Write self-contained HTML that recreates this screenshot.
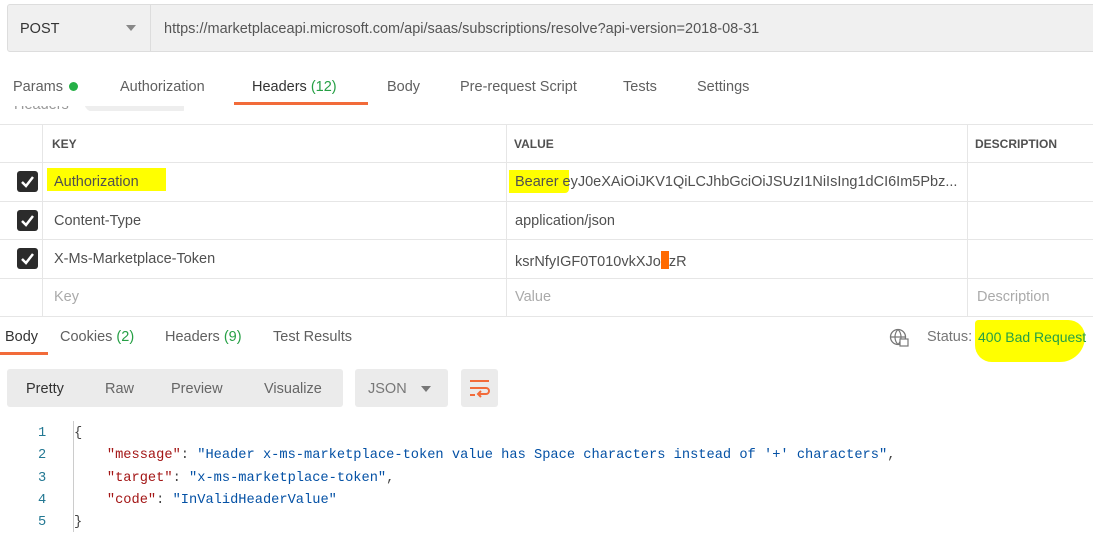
<!DOCTYPE html>
<html><head><style>
*{margin:0;padding:0;box-sizing:border-box}
body{width:1093px;height:543px;overflow:hidden;background:#fff;font-family:"Liberation Sans",sans-serif;color:#505050;position:relative;font-size:14.5px}
.a{position:absolute;white-space:nowrap}
.t{margin-top:2px}
.hl{background:#ffff00}
.cb{position:absolute;left:17px;width:21px;height:21px;background:#2b2b2b;border-radius:3px}
.cb svg{position:absolute;left:3px;top:4px}
.hline{position:absolute;left:0;width:1093px;height:1px;background:#e6e6e6}
.vline{position:absolute;width:1px;background:#e6e6e6}
.code{font-family:"Liberation Mono",monospace;font-size:13.7px;color:#444}
.k{color:#a31515}.s{color:#0451a5}
</style></head><body>
<div class="a" style="left:7px;top:4px;width:1090px;height:48px;background:#f0f0f0;border:1px solid #ddd;border-radius:3px"></div>
<div class="a" style="left:150px;top:5px;width:1px;height:46px;background:#ddd"></div>
<div class="a" style="left:20px;top:21px;color:#333">POST</div>
<div class="a" style="left:126px;top:25px;width:0;height:0;border-left:5px solid transparent;border-right:5px solid transparent;border-top:6px solid #888"></div>
<div class="a" style="left:164px;top:21px;color:#555">https://marketplaceapi.microsoft.com/api/saas/subscriptions/resolve?api-version=2018-08-31</div>
<div class="a" style="left:13px;top:79px;color:#606060">Params <span style="display:inline-block;width:9px;height:9px;border-radius:50%;background:#26b047;margin-left:2px"></span></div>
<div class="a" style="left:120px;top:79px;color:#606060">Authorization</div>
<div class="a" style="left:252px;top:79px;color:#333">Headers <span style="color:#26a045">(12)</span></div>
<div class="a" style="left:234px;top:102px;width:134px;height:3px;background:#f26b3a"></div>
<div class="a" style="left:387px;top:79px;color:#606060">Body</div>
<div class="a" style="left:460px;top:79px;color:#606060">Pre-request Script</div>
<div class="a" style="left:623px;top:79px;color:#606060">Tests</div>
<div class="a" style="left:697px;top:79px;color:#606060">Settings</div>
<div class="a" style="left:14px;top:106px;height:5px;overflow:hidden;width:170px"><div style="position:absolute;top:-9px;color:#999">Headers</div><div style="position:absolute;left:70px;top:-14px;width:105px;height:20px;border-radius:10px;background:#eee"></div></div>
<div class="hline" style="top:124px"></div>
<div class="hline" style="top:162px"></div>
<div class="hline" style="top:201px"></div>
<div class="hline" style="top:239px"></div>
<div class="hline" style="top:278px"></div>
<div class="hline" style="top:316px"></div>
<div class="vline" style="left:42px;top:124px;height:192px"></div>
<div class="vline" style="left:506px;top:124px;height:192px"></div>
<div class="vline" style="left:967px;top:124px;height:192px"></div>
<div class="a" style="left:52px;top:137px;font-size:12px;font-weight:bold;color:#505050">KEY</div>
<div class="a" style="left:514px;top:137px;font-size:12px;font-weight:bold;color:#505050">VALUE</div>
<div class="a" style="left:975px;top:137px;font-size:12px;font-weight:bold;color:#505050">DESCRIPTION</div>
<div class="cb" style="top:171px"><svg width="15" height="13" viewBox="0 0 15 13"><path d="M2 7l4 4 7-9" stroke="#fff" stroke-width="2.5" fill="none"/></svg></div>
<div class="cb" style="top:210px"><svg width="15" height="13" viewBox="0 0 15 13"><path d="M2 7l4 4 7-9" stroke="#fff" stroke-width="2.5" fill="none"/></svg></div>
<div class="cb" style="top:248px"><svg width="15" height="13" viewBox="0 0 15 13"><path d="M2 7l4 4 7-9" stroke="#fff" stroke-width="2.5" fill="none"/></svg></div>
<div class="a hl" style="left:47px;top:168px;width:119px;height:23px"></div>
<div class="a" style="left:54px;top:174px">Authorization</div>
<div class="a" style="left:54px;top:213px">Content-Type</div>
<div class="a" style="left:54px;top:251px">X-Ms-Marketplace-Token</div>
<div class="a" style="left:54px;top:289px;color:#aaa">Key</div>
<div class="a hl" style="left:509px;top:170px;width:60px;height:23px;border-radius:0 0 4px 0"></div>
<div class="a" style="left:515px;top:174px">Bearer eyJ0eXAiOiJKV1QiLCJhbGciOiJSUzI1NiIsIng1dCI6Im5Pbz...</div>
<div class="a" style="left:515px;top:213px">application/json</div>
<div class="a" style="left:515px;top:251px">ksrNfyIGF0T010vkXJo<span style="display:inline-block;width:8px;height:18px;background:#ff6a00;vertical-align:-3px"></span>zR</div>
<div class="a" style="left:515px;top:289px;color:#aaa">Value</div>
<div class="a" style="left:977px;top:289px;color:#aaa">Description</div>
<div class="a" style="left:5px;top:329px;color:#333">Body</div>
<div class="a" style="left:0;top:352px;width:48px;height:3px;background:#f26b3a"></div>
<div class="a" style="left:60px;top:329px;color:#606060">Cookies <span style="color:#26a045">(2)</span></div>
<div class="a" style="left:165px;top:329px;color:#606060">Headers <span style="color:#26a045">(9)</span></div>
<div class="a" style="left:273px;top:329px;color:#606060">Test Results</div>
<svg class="a" style="left:889px;top:328px" width="20" height="19" viewBox="0 0 20 19"><circle cx="9" cy="9" r="7.5" fill="none" stroke="#777" stroke-width="1.3"/><path d="M1.5 9h15M9 1.5c-4 4-4 11 0 15M9 1.5c4 4 4 11 0 15" fill="none" stroke="#777" stroke-width="1.2"/><rect x="11" y="11" width="8" height="7" fill="#fff" stroke="#777" stroke-width="1.2"/></svg>
<div class="a" style="left:975px;top:320px;width:110px;height:42px;background:#ffff00;border-radius:4px 20px 30px 20px"></div>
<div class="a" style="left:927px;top:329px;color:#777">Status:</div>
<div class="a" style="left:978px;top:329px;color:#26a045;font-size:14px">400 Bad Request</div>
<div class="a" style="left:7px;top:369px;width:336px;height:38px;background:#ebebeb;border-radius:3px"></div>
<div class="a" style="left:26px;top:381px;color:#333">Pretty</div>
<div class="a" style="left:105px;top:381px;color:#666">Raw</div>
<div class="a" style="left:171px;top:381px;color:#666">Preview</div>
<div class="a" style="left:264px;top:381px;color:#666">Visualize</div>
<div class="a" style="left:355px;top:369px;width:93px;height:38px;background:#ebebeb;border-radius:3px"></div>
<div class="a" style="left:368px;top:381px;color:#777">JSON</div>
<div class="a" style="left:421px;top:386px;width:0;height:0;border-left:5px solid transparent;border-right:5px solid transparent;border-top:6px solid #777"></div>
<div class="a" style="left:461px;top:369px;width:37px;height:38px;background:#ebebeb;border-radius:3px"></div>
<svg class="a" style="left:469px;top:378px" width="22" height="20" viewBox="0 0 22 20"><path d="M1 3h19M1 10h16a3 3 0 0 1 0 6h-7M1 17h5" fill="none" stroke="#f26b3a" stroke-width="2"/><path d="M12 13l-3 3 3 3" fill="none" stroke="#f26b3a" stroke-width="2"/></svg>
<div class="a" style="left:73px;top:421px;width:8px;height:111px;border-left:1px solid #ccc"></div>
<div class="a code" style="left:38px;top:423px;line-height:22.3px;color:#237893">1<br>2<br>3<br>4<br>5</div>
<div class="a code" style="left:74px;top:423px;line-height:22.3px">{<br>&nbsp;&nbsp;&nbsp;&nbsp;<span class="k">"message"</span>: <span class="s">"Header x-ms-marketplace-token value has Space characters instead of '+' characters"</span>,<br>&nbsp;&nbsp;&nbsp;&nbsp;<span class="k">"target"</span>: <span class="s">"x-ms-marketplace-token"</span>,<br>&nbsp;&nbsp;&nbsp;&nbsp;<span class="k">"code"</span>: <span class="s">"InValidHeaderValue"</span><br>}</div>
</body></html>
